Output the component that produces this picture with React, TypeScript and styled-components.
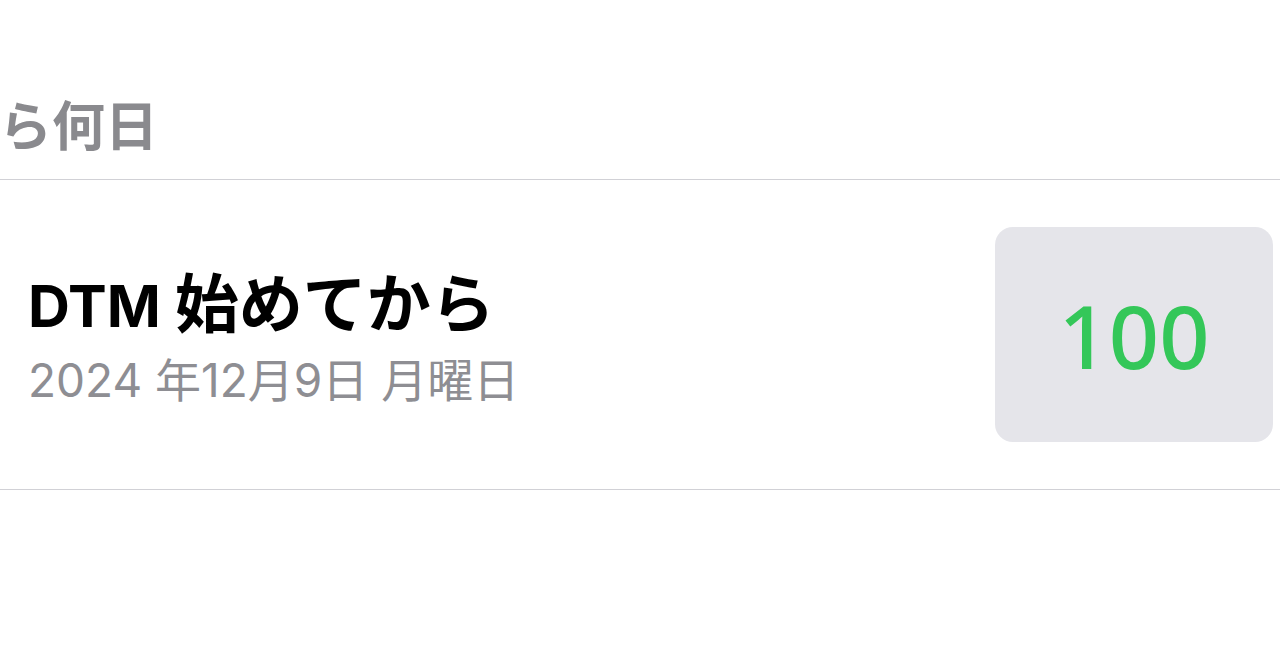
import React from "react";
import styled, { createGlobalStyle } from "styled-components";

const Global = createGlobalStyle`
  html, body { margin: 0; padding: 0; background: #ffffff; }
  body { font-family: "Inter", "Noto Sans CJK JP", sans-serif; overflow: hidden; }
`;

const Page = styled.div`
  width: 1280px;
  height: 670px;
  background: #ffffff;
  overflow: hidden;
`;

const Header = styled.div`
  height: 180px;
  display: flex;
  align-items: flex-end;
  border-bottom: 1.5px solid #d1d1d6;
  box-sizing: border-box;
  overflow: hidden;
`;

const HeaderTitle = styled.h2`
  margin: 0 0 23px -54px;
  font-family: "Noto Sans CJK JP", sans-serif;
  font-size: 53px;
  font-weight: 700;
  line-height: 1.2;
  color: #8a8a8e;
  white-space: nowrap;
`;

const Row = styled.div`
  display: flex;
  align-items: center;
  justify-content: space-between;
  padding: 47px 7px 47px 28px;
  border-bottom: 1.5px solid #d1d1d6;
`;

const Info = styled.div`
  display: flex;
  flex-direction: column;
  gap: 12px;
`;

const Title = styled.div`
  font-family: "Noto Sans CJK JP", sans-serif;
  font-size: 64px;
  font-weight: 700;
  line-height: 1.2;
  color: #000000;
  white-space: nowrap;
`;

const Latin = styled.span`
  font-family: "Inter", "Liberation Sans", sans-serif;
  font-size: 58px;
  margin-right: 14px;
`;

const Sub = styled.div`
  font-family: "Inter", "Noto Sans CJK JP", sans-serif;
  font-size: 46px;
  font-weight: 400;
  line-height: 1.2;
  color: #8e8e93;
  white-space: nowrap;
`;

const Badge = styled.div`
  width: 278px;
  height: 215px;
  border-radius: 18px;
  background: #e5e5ea;
  display: flex;
  align-items: center;
  justify-content: center;
`;

const Count = styled.span<{ $color: string }>`
  font-family: "Noto Sans", "Open Sans", sans-serif;
  font-size: 88px;
  font-weight: 500;
  color: ${(p) => p.$color};
  line-height: 1;
`;

export default function App() {
  return (
    <Page>
      <Global />
      <Header>
        <HeaderTitle>から何日</HeaderTitle>
      </Header>
      <Row>
        <Info>
          <Title>
            <Latin>DTM</Latin>始めてから
          </Title>
          <Sub>2024 年12月9日 月曜日</Sub>
        </Info>
        <Badge>
          <Count $color="#34c759">100</Count>
        </Badge>
      </Row>
    </Page>
  );
}
